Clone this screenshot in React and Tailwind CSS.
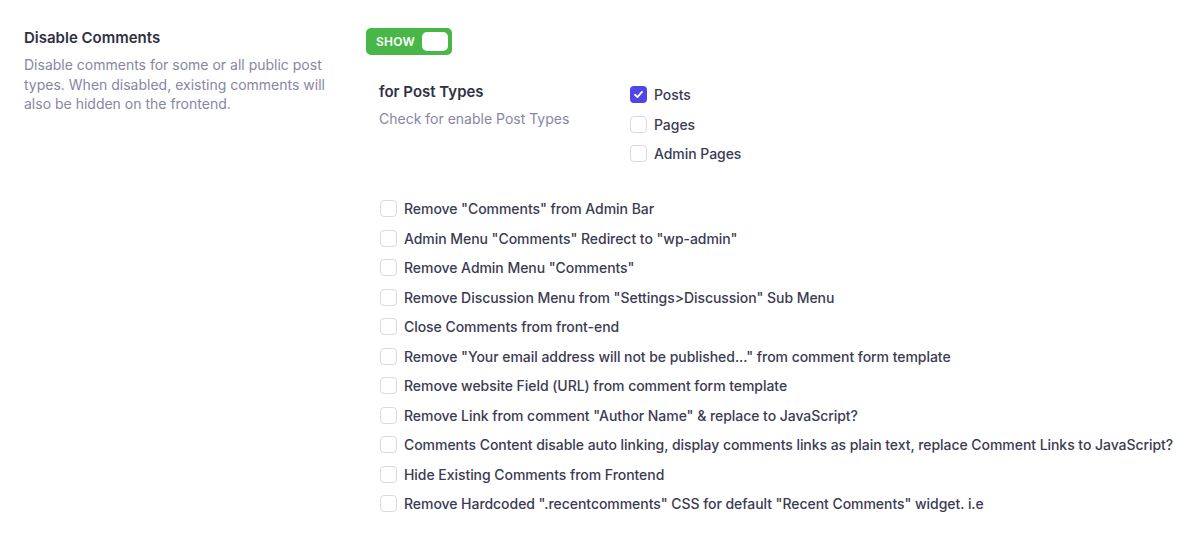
import React from "react";

const items = [
  'Remove "Comments" from Admin Bar',
  'Admin Menu "Comments" Redirect to "wp-admin"',
  'Remove Admin Menu "Comments"',
  'Remove Discussion Menu from "Settings>Discussion" Sub Menu',
  "Close Comments from front-end",
  'Remove "Your email address will not be published..." from comment form template',
  "Remove website Field (URL) from comment form template",
  'Remove Link from comment "Author Name" & replace to JavaScript?',
  "Comments Content disable auto linking, display comments links as plain text, replace Comment Links to JavaScript?",
  "Hide Existing Comments from Frontend",
  'Remove Hardcoded ".recentcomments" CSS for default "Recent Comments" widget. i.e',
];

function Box({ checked }) {
  if (checked) {
    return (
      <span className="flex h-[17px] w-[17px] shrink-0 items-center justify-center rounded-[4px] bg-[#4f46e5]">
        <svg width="11" height="11" viewBox="0 0 12 12" fill="none">
          <path d="M2.2 6.3 4.8 8.8 9.8 3.2" stroke="white" strokeWidth="2" strokeLinecap="round" strokeLinejoin="round" />
        </svg>
      </span>
    );
  }
  return <span className="h-[17px] w-[17px] shrink-0 rounded-[4px] border border-[#dadae2] bg-white" />;
}

export default function App() {
  return (
    <div className="min-h-[538px] w-[1200px] bg-white font-['Inter',sans-serif] text-[14px] text-[#3b3b52]">
      <div className="flex pl-[24px] pt-[28px]">
        <div className="w-[342px] shrink-0 pt-[1px]">
          <div className="text-[15px] font-semibold leading-[18px] text-[#303044]">Disable Comments</div>
          <p className="mt-[8px] w-[310px] text-[14px] leading-[19.5px] text-[#8786a3]">
            Disable comments for some or all public post types. When disabled, existing comments will also be hidden on the frontend.
          </p>
        </div>
        <div className="flex flex-col">
          <div className="flex h-[27px] w-[86px] items-center justify-between rounded-[5px] bg-[#49b648] pl-[10px] pr-[4px]">
            <span className="text-[12px] font-semibold tracking-[0.2px] text-white">SHOW</span>
            <span className="h-[19px] w-[26px] rounded-[5px] bg-white" />
          </div>
          <div className="mt-[28px] flex pl-[13px]">
            <div className="w-[251px] shrink-0">
              <div className="text-[15px] font-semibold leading-[18px] text-[#303044]">for Post Types</div>
              <div className="mt-[9px] leading-[18px] text-[#8786a3]">Check for enable Post Types</div>
            </div>
            <div className="flex flex-col gap-[12.5px] pt-[3px] font-medium tracking-[-0.05px]">
              <label className="flex items-center gap-[7px] leading-[17px]">
                <Box checked />
                <span>Posts</span>
              </label>
              <label className="flex items-center gap-[7px] leading-[17px]">
                <Box />
                <span>Pages</span>
              </label>
              <label className="flex items-center gap-[7px] leading-[17px]">
                <Box />
                <span>Admin Pages</span>
              </label>
            </div>
          </div>
          <div className="mt-[38px] flex flex-col gap-[12.5px] pl-[14px] font-medium tracking-[-0.05px]">
            {items.map((t) => (
              <label key={t} className="flex items-center gap-[7px] whitespace-nowrap leading-[17px]">
                <Box />
                <span>{t}</span>
              </label>
            ))}
          </div>
        </div>
      </div>
    </div>
  );
}
